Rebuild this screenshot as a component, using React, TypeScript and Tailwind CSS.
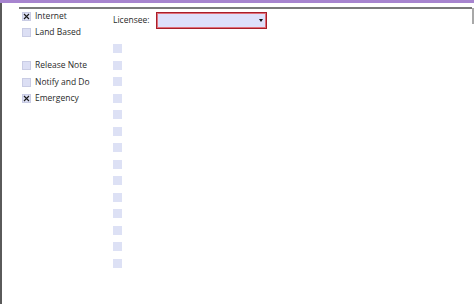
import React from "react";

const leftRows: { label: string; checked: boolean }[] = [
  { label: "Internet", checked: true },
  { label: "Land Based", checked: false },
  { label: "", checked: false },
  { label: "Release Note", checked: false },
  { label: "Notify and Do", checked: false },
  { label: "Emergency", checked: true },
];

function Box({ checked }: { checked: boolean }) {
  return (
    <div className="flex h-[9px] w-[9px] items-center justify-center border border-[#c9cce4] bg-[#dcdff4]">
      {checked && (
        <svg width="7" height="7" viewBox="0 0 7 7">
          <path d="M1 1 L6 6 M6 1 L1 6" stroke="#1a1a1a" strokeWidth="1.1" />
        </svg>
      )}
    </div>
  );
}

export default function App() {
  return (
    <div
      className="flex h-[304px] w-[474px] flex-col overflow-hidden bg-white text-[8.5px] text-[#2a2a2a]"
      style={{ fontFamily: '"Open Sans", "Noto Sans", sans-serif' }}
    >
      {/* title band */}
      <div className="h-[3px] shrink-0 bg-[#a784cf]" />

      <div className="flex flex-1">
        <div className="w-[2px] bg-[#5a5a5a]" />
        <div className="flex flex-1 flex-col">
          <div className="flex h-[21px] items-start pt-[4px]">
            <div className="ml-[17px] h-[2px] flex-1 bg-[#7a7a7a]" />
            <div className="mt-[1px] h-[16px] w-[2px] bg-[#a8a8a8]" />
          </div>

          <div className="mt-[-15px] flex">
            <div className="ml-[20px] mt-[-1px] flex w-[91px] flex-col">
              {leftRows.map((r, i) => (
                <div key={i} className="flex h-[16.5px] items-center gap-[4px]">
                  {r.label && (
                    <>
                      <Box checked={r.checked} />
                      <span>{r.label}</span>
                    </>
                  )}
                </div>
              ))}
            </div>

            <div className="flex flex-col">
              <div className="mt-[3px] flex h-[17px] items-center">
                <span className="w-[43px]">Licensee:</span>
                <div className="flex h-[17px] w-[111px] border border-[#a81e2a] bg-[#dde0fb] shadow-[inset_0_0_0_1px_#e0707a]">
                  <div className="flex-1" />
                  <div className="flex w-[11px] items-center justify-center">
                    <svg width="4" height="3" viewBox="0 0 4 3">
                      <path d="M0 0 H4 L2 3 Z" fill="#111" />
                    </svg>
                  </div>
                </div>
              </div>
              <div className="mt-[15px] flex flex-col gap-[7.5px]">
                {Array.from({ length: 14 }).map((_, i) => (
                  <div key={i} className="h-[9px] w-[9px] bg-[#dde1f5]" />
                ))}
              </div>
            </div>
          </div>
        </div>
      </div>
    </div>
  );
}
